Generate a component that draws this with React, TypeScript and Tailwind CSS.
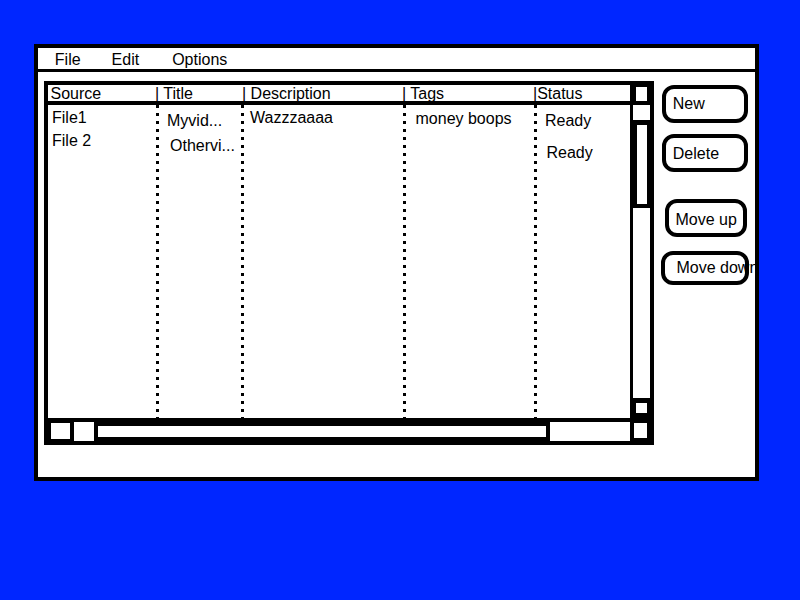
import React from 'react'

const dotted =
    'w-[3px] shrink-0 bg-[image:repeating-linear-gradient(to_bottom,#000_0px,#000_3px,transparent_3px,transparent_8px)]'

function Button({ label, className, textClass }: { label: string; className: string; textClass: string }) {
    return (
        <div className={`relative bg-white whitespace-nowrap ${className}`}>
            <div className={textClass}>{label}</div>
            {/* border painted above the label, the way the mockup shows it */}
            <span className="pointer-events-none absolute inset-0 rounded-[12px] border-4 border-black" />
        </div>
    )
}

export default function App() {
    return (
        <div className="min-h-screen bg-[#0026ff] pt-[44px] pl-[34px] font-['Liberation_Sans',Arial,sans-serif] text-[16px] leading-[20px] text-black">
            <div className="w-[725px] h-[437px] border-4 border-black bg-white overflow-hidden flex flex-col">
                {/* Menu bar */}
                <div className="h-[24px] shrink-0 border-b-[3px] border-black flex pt-[1.5px]">
                    <span className="ml-[16.8px]">File</span>
                    <span className="ml-[31px]">Edit</span>
                    <span className="ml-[33px]">Options</span>
                </div>

                <div className="flex items-start pt-[9px] pl-[6px]">
                    {/* Table */}
                    <div className="w-[610px] h-[364px] shrink-0 border-4 border-black bg-black flex flex-col">
                        <div className="flex h-[333px]">
                            <div className="w-[582px] bg-white flex flex-col">
                                {/* Header */}
                                <div className="h-[20px] shrink-0 border-b-4 border-black flex leading-[18px] whitespace-pre">
                                    <div className="w-[107px] pl-[2.5px]">Source</div>
                                    <div className="w-[87px]">| Title</div>
                                    <div className="w-[160px]">| Description</div>
                                    <div className="w-[131px]">| Tags</div>
                                    <div className="w-[97px]">|Status</div>
                                </div>

                                {/* Rows */}
                                <div className="flex flex-1">
                                    <div className="w-[108px] shrink-0 pl-[4px] pt-[2.5px]">
                                        <div className="mb-[3px]">File1</div>
                                        <div>File 2</div>
                                    </div>
                                    <div className={dotted} />
                                    <div className="w-[82px] shrink-0 pt-[5.5px] whitespace-nowrap">
                                        <div className="pl-[8px] mb-[5px]">Myvid...</div>
                                        <div className="pl-[11px]">Othervi...</div>
                                    </div>
                                    <div className={dotted} />
                                    <div className="w-[159px] shrink-0 pl-[6px] pt-[3px]">Wazzzaaaa</div>
                                    <div className={dotted} />
                                    <div className="w-[128px] shrink-0 pl-[9.5px] pt-[3.5px] whitespace-nowrap">money boops</div>
                                    <div className={dotted} />
                                    <div className="w-[93px] shrink-0 pt-[6px]">
                                        <div className="pl-[8px] mb-[11.5px]">Ready</div>
                                        <div className="pl-[9.5px]">Ready</div>
                                    </div>
                                </div>
                            </div>

                            {/* Vertical scrollbar */}
                            <div className="w-[20px] flex flex-col">
                                <div className="mt-[2px] ml-[6px] w-[11px] h-[14px] bg-white" />
                                <div className="mt-[4px] ml-[3px] w-[17px] h-[15px] bg-white" />
                                <div className="mt-[5px] ml-[7px] w-[10px] h-[79px] bg-white" />
                                <div className="mt-[4px] ml-[3px] w-[17px] h-[190px] bg-white" />
                                <div className="mt-[5px] ml-[6px] w-[11px] h-[10px] bg-white" />
                            </div>
                        </div>

                        {/* Horizontal scrollbar */}
                        <div className="h-[23px] flex items-start">
                            <div className="mt-[5px] ml-[3px] w-[19px] h-[16px] bg-white" />
                            <div className="mt-[4px] ml-[4px] w-[20px] h-[19px] bg-white" />
                            <div className="mt-[8px] ml-[4px] w-[448px] h-[11px] bg-white" />
                            <div className="mt-[4px] ml-[4px] w-[80px] h-[19px] bg-white" />
                            <div className="mt-[5px] ml-[4px] w-[13px] h-[15px] bg-white" />
                        </div>
                    </div>

                    {/* Buttons */}
                    <div className="flex flex-col ml-[7px]">
                        <Button label="New" className="mt-[4px] ml-[1px] w-[86px] h-[38px]" textClass="pl-[10.8px] pt-[9px]" />
                        <Button label="Delete" className="mt-[11px] ml-[1px] w-[86px] h-[38px]" textClass="pl-[10.8px] pt-[9.5px]" />
                        <Button label="Move up" className="mt-[27px] ml-[4px] w-[82px] h-[38px]" textClass="pl-[10.5px] pt-[10.5px]" />
                        <Button label="Move down" className="mt-[14px] w-[88px] h-[34px]" textClass="pl-[15.5px] pt-[7px]" />
                    </div>
                </div>
            </div>
        </div>
    )
}
